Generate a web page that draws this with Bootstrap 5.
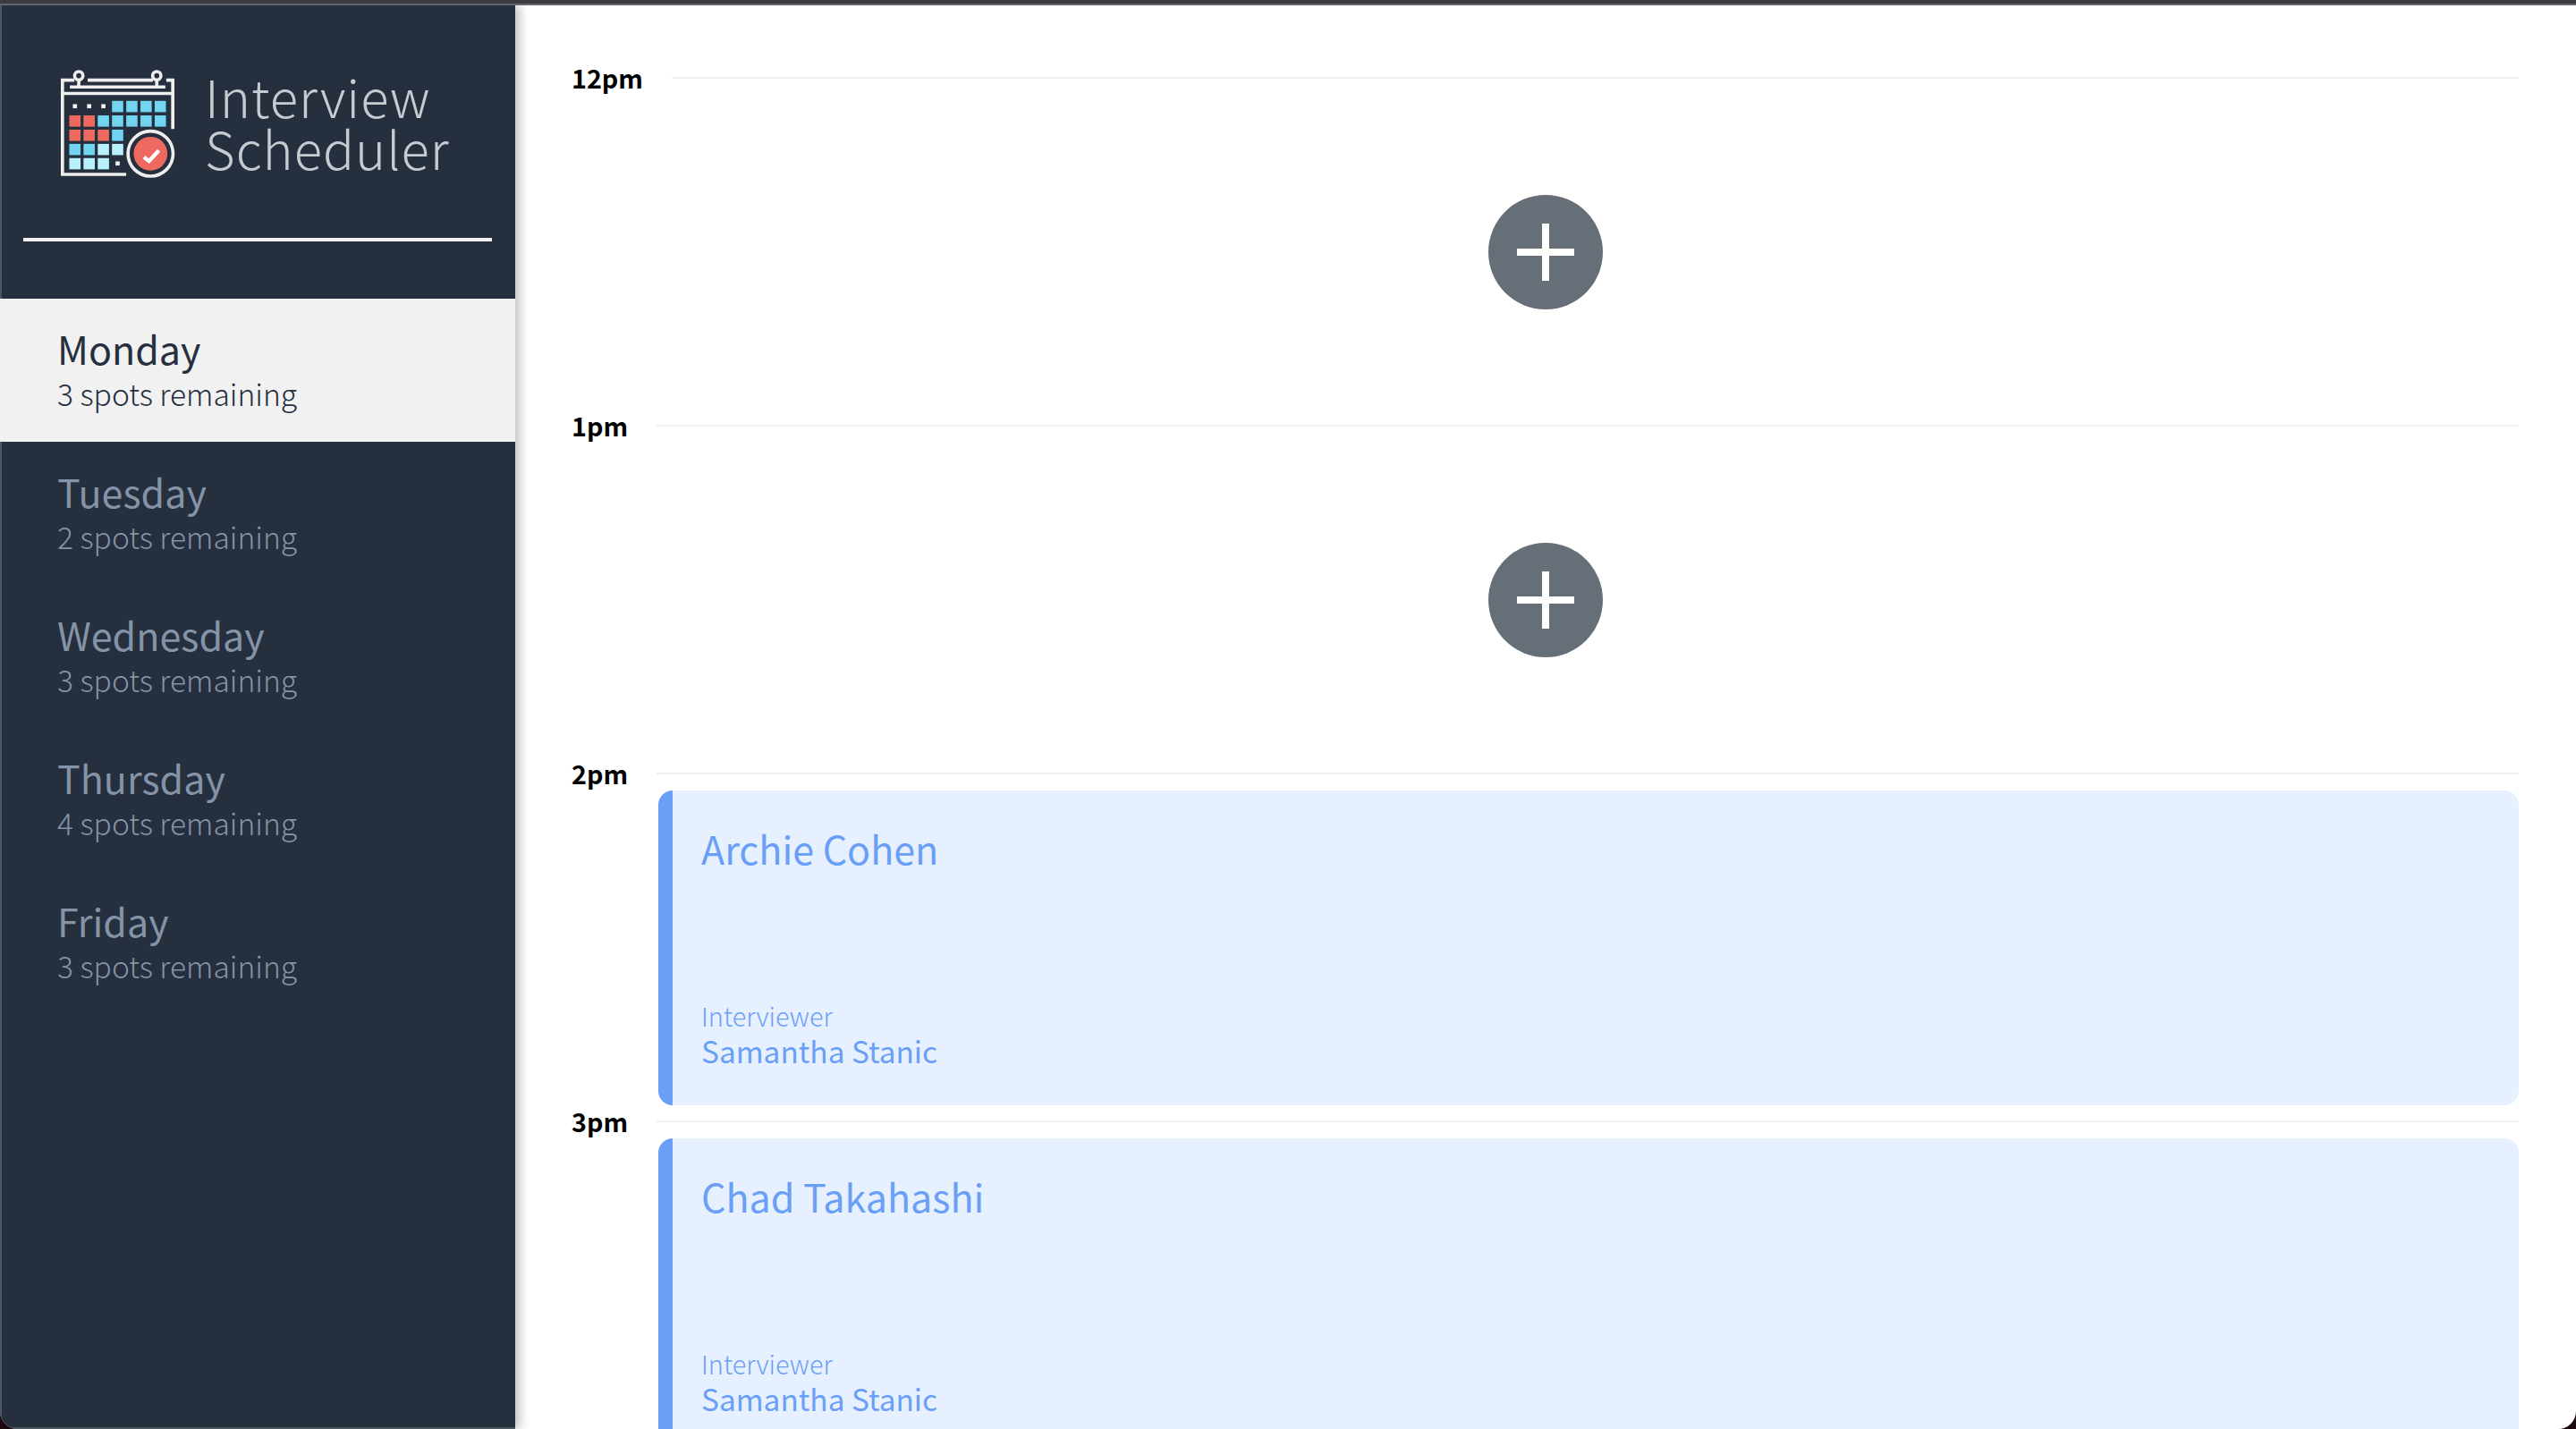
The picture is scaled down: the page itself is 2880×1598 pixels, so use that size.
<!doctype html>
<html lang="en">
<head>
<meta charset="utf-8">
<title>Interview Scheduler</title>
<link href="https://cdn.jsdelivr.net/npm/bootstrap@5.3.0/dist/css/bootstrap.min.css" rel="stylesheet">
<style>
html,body{height:100%;background:#1c0a10;overflow:hidden}
body{font-family:"Noto Sans CJK JP","Noto Sans",sans-serif}
.topbar{height:6px;background:#3b3b40;border-bottom:2px solid #66666a}
.shell{height:1592px;background:#fff;border-radius:0 0 20px 20px;overflow:hidden}
.side{width:576px;background:#252f3e;border-left:2px solid #4d5762;border-bottom:2px solid #4d5762;box-shadow:6px 0 10px rgba(0,0,0,.22);position:relative;z-index:1}
.brand{padding:72px 0 0 66px;height:260px;color:#c6cbd1}
.brand svg{width:128px;height:121px;margin-right:33px}
.brand-text{font-size:58px;line-height:58px;font-weight:200;letter-spacing:1px}
.rule{height:4px;background:#f1f1f1;margin:0 26px 64px 24px}
.day-link{height:160px;padding:25px 0 0 62px;color:#8493a6}
.day-link.now{background:#f1f1f1;color:#252f3e;margin-left:-2px;padding-left:64px}
.day-link:hover,.day-link:focus{color:#8493a6}
.day-link.now:hover{color:#252f3e}
.day-name{font-size:43px;line-height:60px;font-weight:400;margin:0}
.day-left{font-size:33.6px;line-height:42px;font-weight:300;margin:0}
.sched{padding:62px 64px 0 63px;min-width:0}
.slot{height:389px}
.slot-head{height:38px}
.hour{font-size:28.7px;font-weight:700;color:#000;line-height:38px;margin-right:32px}
.hour-line{height:2px;background:#f1f1f1}
.add-btn{width:128px;height:128px;border-radius:50%;background:#666e78;border:0;padding:0}
.add-btn svg{width:64px;height:64px;display:block;margin:auto}
.booked{margin-left:97px;height:352px;background:#e7f0fe;border-left:16px solid #6a9ff8;border-radius:16px;padding:34px 32px 41px;color:#6a9ff8}
.guest{font-size:43px;line-height:60px;font-weight:400;margin:0}
.who-label{font-size:28.8px;line-height:38px;font-weight:300;margin:0}
.who{font-size:33.4px;line-height:40px;font-weight:400;margin:0}
</style>
</head>
<body>
<div class="topbar"></div>
<div class="shell d-flex">
  <aside class="side flex-shrink-0">
    <div class="brand d-flex align-items-start">
      <svg viewBox="85 50 385 365" role="img" aria-label="Calendar logo" fill="none" stroke="#eeeeee" stroke-width="11">
        <path d="M130 85H90V403H305M175 85H395M440 85H462V250M115 108H437M95 130H462"/>
        <circle cx="145" cy="70" r="14"/><path d="M145 84V105"/>
        <circle cx="408" cy="70" r="14"/><path d="M408 84V105"/>
        <g stroke="none">
          <g fill="#71d5f1">
            <rect x="257" y="155" width="38" height="38"/><rect x="305" y="155" width="38" height="38"/><rect x="353" y="155" width="38" height="38"/><rect x="401" y="155" width="38" height="38"/>
            <rect x="209" y="204" width="38" height="38"/><rect x="257" y="204" width="38" height="38"/><rect x="305" y="204" width="38" height="38"/><rect x="353" y="204" width="38" height="38"/><rect x="401" y="204" width="38" height="38"/>
            <rect x="257" y="252" width="38" height="38"/>
            <rect x="113" y="300" width="38" height="38"/><rect x="161" y="300" width="38" height="38"/>
          </g>
          <g fill="#ee6a60">
            <rect x="113" y="204" width="38" height="38"/><rect x="161" y="204" width="38" height="38"/>
            <rect x="113" y="252" width="38" height="38"/><rect x="161" y="252" width="38" height="38"/><rect x="209" y="252" width="38" height="38"/>
          </g>
          <g fill="#b8f0fd">
            <rect x="209" y="300" width="38" height="38"/><rect x="257" y="300" width="38" height="38"/>
            <rect x="113" y="348" width="38" height="38"/><rect x="161" y="348" width="38" height="38"/><rect x="209" y="348" width="38" height="38"/>
          </g>
          <g fill="#f4f4f4">
            <rect x="125" y="166" width="14" height="14"/><rect x="173" y="166" width="14" height="14"/><rect x="221" y="166" width="14" height="14"/><rect x="269" y="359" width="14" height="14"/>
          </g>
        </g>
        <circle cx="387" cy="333" r="76" fill="#252f3e"/>
        <circle cx="387" cy="333" r="57" fill="#ee6a60" stroke="none"/>
        <path d="M365 345L382 358L415 322" stroke="#fff" stroke-width="13"/>
      </svg>
      <div class="brand-text">Interview<br>Scheduler</div>
    </div>
    <div class="rule"></div>
    <nav class="nav flex-column">
      <a class="nav-link day-link now" href="#"><h2 class="day-name">Monday</h2><p class="day-left">3 spots remaining</p></a>
      <a class="nav-link day-link" href="#"><h2 class="day-name">Tuesday</h2><p class="day-left">2 spots remaining</p></a>
      <a class="nav-link day-link" href="#"><h2 class="day-name">Wednesday</h2><p class="day-left">3 spots remaining</p></a>
      <a class="nav-link day-link" href="#"><h2 class="day-name">Thursday</h2><p class="day-left">4 spots remaining</p></a>
      <a class="nav-link day-link" href="#"><h2 class="day-name">Friday</h2><p class="day-left">3 spots remaining</p></a>
    </nav>
  </aside>
  <main class="sched flex-grow-1">
    <section class="slot d-flex flex-column">
      <div class="slot-head d-flex align-items-center"><span class="hour">12pm</span><div class="hour-line flex-grow-1"></div></div>
      <div class="flex-grow-1 d-flex align-items-center justify-content-center">
        <button class="add-btn" type="button" aria-label="Add"><svg viewBox="0 0 64 64"><path d="M0 32H64M32 0V64" stroke="#fff" stroke-width="8"/></svg></button>
      </div>
    </section>
    <section class="slot d-flex flex-column">
      <div class="slot-head d-flex align-items-center"><span class="hour">1pm</span><div class="hour-line flex-grow-1"></div></div>
      <div class="flex-grow-1 d-flex align-items-center justify-content-center">
        <button class="add-btn" type="button" aria-label="Add"><svg viewBox="0 0 64 64"><path d="M0 32H64M32 0V64" stroke="#fff" stroke-width="8"/></svg></button>
      </div>
    </section>
    <section class="slot d-flex flex-column">
      <div class="slot-head d-flex align-items-center"><span class="hour">2pm</span><div class="hour-line flex-grow-1"></div></div>
      <div class="booked d-flex flex-column justify-content-between flex-shrink-0">
        <h3 class="guest">Archie Cohen</h3>
        <div><p class="who-label">Interviewer</p><p class="who">Samantha Stanic</p></div>
      </div>
    </section>
    <section class="slot d-flex flex-column">
      <div class="slot-head d-flex align-items-center"><span class="hour">3pm</span><div class="hour-line flex-grow-1"></div></div>
      <div class="booked d-flex flex-column justify-content-between flex-shrink-0">
        <h3 class="guest">Chad Takahashi</h3>
        <div><p class="who-label">Interviewer</p><p class="who">Samantha Stanic</p></div>
      </div>
    </section>
  </main>
</div>
<script src="https://cdn.jsdelivr.net/npm/bootstrap@5.3.0/dist/js/bootstrap.bundle.min.js"></script>
</body>
</html>
